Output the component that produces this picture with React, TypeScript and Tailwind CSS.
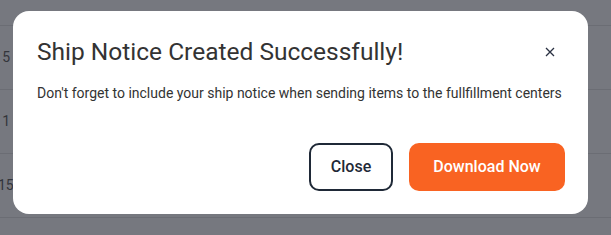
import React from "react";

export default function App() {
  const rows = ["5", "1", "15"];
  return (
    <div className="relative w-[611px] h-[235px] overflow-hidden bg-[#76787f]" style={{ fontFamily: "Roboto, 'Liberation Sans', sans-serif" }}>
      {/* background table (dimmed) */}
      <div className="flex flex-col pt-[25px]">
        {rows.map((r, i) => (
          <div key={i} className="h-[64px] border-t border-[#6b6d74] flex items-center">
            <span className="w-[12px] text-right text-[14px] text-[#33353b] -ml-[2px]">{r}</span>
          </div>
        ))}
        <div className="border-t border-[#6b6d74]" />
      </div>

      {/* modal */}
      <div className="absolute left-[13px] top-[11px] w-[575px] h-[203px] bg-white rounded-[16px] pl-[24px] pr-[23px] pt-[23px] pb-[23px] flex flex-col">
        <div className="flex items-start justify-between">
          <h2 className="text-[24.5px] leading-[36px] text-[#333333] font-normal">Ship Notice Created Successfully!</h2>
          <button className="mt-[13px] mr-[10px] w-[10px] h-[10px] flex items-center justify-center">
            <svg width="10" height="10" viewBox="0 0 10 10" fill="none">
              <path d="M1 1 L9 9 M9 1 L1 9" stroke="#2a3142" strokeWidth="1.3" />
            </svg>
          </button>
        </div>
        <p className="mt-[13px] text-[14px] leading-[20px] text-[#333333]">
          Don't forget to include your ship notice when sending items to the fullfillment centers
        </p>
        <div className="mt-auto flex justify-end gap-[16px]">
          <button className="w-[84px] h-[48px] rounded-[10px] border-2 border-[#1f2937] text-[16px] font-medium text-[#1f2937]">
            Close
          </button>
          <button className="w-[156px] h-[48px] rounded-[10px] bg-[#f96322] text-[16px] font-medium text-white">
            Download Now
          </button>
        </div>
      </div>
    </div>
  );
}
